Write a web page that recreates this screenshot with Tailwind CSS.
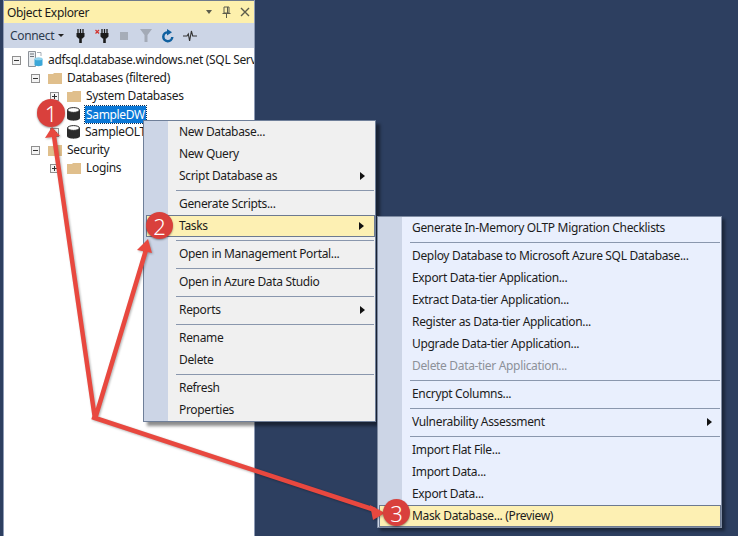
<!DOCTYPE html>
<html>
<head>
<meta charset="utf-8">
<script src="https://cdn.jsdelivr.net/npm/@tailwindcss/browser@4"></script>
</head>
<body class="m-0">
<div class="relative w-[738px] h-[536px] overflow-hidden bg-[#2d3f60] text-[12px] tracking-[-0.33px] text-[#1c1c1c] font-['Noto_Sans','Open_Sans',sans-serif]">

  <!-- Object Explorer panel -->
  <div class="absolute left-0 top-0 w-[256px] h-[536px] pl-[3px]">
    <div class="flex flex-col w-[252px] h-full border-r-[1px] border-l-[1px] border-[#8e9bb5] bg-white">
      <div class="flex items-center justify-between h-[23px] bg-[#fdf0ac] border-t border-t-[#6e7a8c] pl-[3px] pr-[4px]">
        <span class="text-[#1a1a1a] pt-[1px]">Object Explorer</span>
        <div class="flex items-center gap-[9px]">
          <svg width="8" height="5" viewBox="0 0 8 5"><path d="M1 0h6L4 4z" fill="#5c5c4c"/></svg>
          <svg width="9" height="12" viewBox="0 0 9 12"><path d="M2 1h5v6H2zM0.500 7.500h8M4.500 8v4M5.500 1v6" stroke="#5c5c4c" fill="none"/></svg>
          <svg width="10" height="10" viewBox="0 0 10 10"><path d="M1 1l8 8M9 1l-8 8" stroke="#5c5c4c" stroke-width="1.400"/></svg>
        </div>
      </div>
      <div class="flex items-center h-[25px] bg-[#ccd5e6] pl-[6px]">
        <span class="w-[44px] text-[#2c3b4f] shrink-0">Connect</span>
        <svg class="ml-[4px] shrink-0" width="6" height="4" viewBox="0 0 6 4"><path d="M0 0h6L3 3z" fill="#222"/></svg>
        <svg class="ml-[12px] shrink-0" width="9" height="14" viewBox="0 0 9 14"><path d="M2 0v4M4.500 0v4M7 0v4" stroke="#1c1c1c" stroke-width="1.300"/><path d="M0.500 4h8v3.500L6.500 9.500h-4L0.500 7.500zM3.200 9h2.600v5H3.200z" fill="#1c1c1c"/></svg>
        <svg class="ml-[10px] shrink-0" width="14" height="14" viewBox="0 0 14 14"><path d="M0.500 1l3.500 3.500M4 1L0.500 4.500" stroke="#d2322d" stroke-width="1.200"/><path d="M7 0v4M9.500 0v4M12 0v4" stroke="#1c1c1c" stroke-width="1.300"/><path d="M5.500 4h8v3.500l-2 2h-4l-2-2zM8.200 9h2.600v5H8.200z" fill="#1c1c1c"/></svg>
        <div class="ml-[11px] w-[8px] h-[8px] bg-[#a6adb8] shrink-0"></div>
        <svg class="ml-[12px] shrink-0" width="12" height="13" viewBox="0 0 12 13"><path d="M0 0h12L7.500 6v7h-3V6z" fill="#a3aab6"/></svg>
        <svg class="ml-[10px] shrink-0" width="12" height="14" viewBox="0 0 12 14"><path d="M10.300 8A4.500 4.500 0 1 1 6 3.200" stroke="#10609f" stroke-width="2.500" fill="none"/><path d="M5 0l5 3.300L5 6.500z" fill="#10609f"/></svg>
        <svg class="ml-[9px] shrink-0" width="14" height="12" viewBox="0 0 14 12"><path d="M0 6h4l1.300-2 1.300 7 1.800-10 1.300 5H14" stroke="#333" stroke-width="1.100" fill="none"/></svg>
      </div>
      <!-- Tree -->
      <div class="relative flex-1 pt-[3px] bg-white whitespace-nowrap overflow-hidden">
        <div class="flex items-center h-[18px] pl-[8px]">
          <span class="flex items-center justify-center shrink-0 w-[9px] h-[9px] border border-[#8f8f8f] bg-[#f4f4f4]"><span class="w-[5px] h-[1px] bg-[#333]"></span></span>
          <svg class="ml-[7px] mt-[-2px] shrink-0" width="15" height="16" viewBox="0 0 15 16"><path d="M0.500 0.500h7v15h-7z" fill="#e8ecef" stroke="#8d9299"/><path d="M2 3h4M2 5.500h4" stroke="#6e747c"/><path d="M6.500 8v6c0 1.500 8 1.500 8 0V8z" fill="#3ba7d8"/><ellipse cx="10.500" cy="7.800" rx="4" ry="1.500" fill="#8fd2ec"/><path d="M9 1.500h4v3.500" stroke="#a5adb5" fill="none"/></svg>
          <span class="ml-[5px]">adfsql.database.windows.net (SQL Serv</span>
        </div>
        <div class="flex items-center h-[18px] pl-[27px]">
          <span class="flex items-center justify-center shrink-0 w-[9px] h-[9px] border border-[#8f8f8f] bg-[#f4f4f4]"><span class="w-[5px] h-[1px] bg-[#333]"></span></span>
          <svg class="ml-[8px] shrink-0" width="14" height="12" viewBox="0 0 14 12"><path d="M0 2h5l1-1h8v11H0z" fill="#e0bf8c"/></svg>
          <span class="ml-[5px]">Databases (filtered)</span>
        </div>
        <div class="flex items-center h-[18px] pl-[46px]">
          <span class="flex items-center justify-center shrink-0 relative w-[9px] h-[9px] border border-[#8f8f8f] bg-[#f4f4f4]"><span class="absolute w-[5px] h-[1px] bg-[#333]"></span><span class="absolute w-[1px] h-[5px] bg-[#333]"></span></span>
          <svg class="ml-[8px] shrink-0" width="14" height="12" viewBox="0 0 14 12"><path d="M0 2h5l1-1h8v11H0z" fill="#e0bf8c"/></svg>
          <span class="ml-[5px]">System Databases</span>
        </div>
        <div class="flex items-center h-[18px] pl-[46px]">
          <span class="shrink-0 w-[9px] h-[9px]"></span>
          <svg class="ml-[8px] shrink-0" width="13" height="14" viewBox="0 0 13 14"><path d="M0 3v8c0 3.500 13 3.500 13 0V3z" fill="#2b2b2b"/><ellipse cx="6.500" cy="3" rx="6" ry="2.400" fill="#fff" stroke="#2b2b2b"/></svg>
          <span class="ml-[5px] px-[1px] h-[17px] leading-[17px] bg-[#0a78d7] text-white outline-1 outline-dotted outline-[#0b2f55]">SampleDW</span>
        </div>
        <div class="flex items-center h-[18px] pl-[46px]">
          <span class="flex items-center justify-center shrink-0 relative w-[9px] h-[9px] border border-[#8f8f8f] bg-[#f4f4f4]"><span class="absolute w-[5px] h-[1px] bg-[#333]"></span><span class="absolute w-[1px] h-[5px] bg-[#333]"></span></span>
          <svg class="ml-[8px] shrink-0" width="13" height="14" viewBox="0 0 13 14"><path d="M0 3v8c0 3.500 13 3.500 13 0V3z" fill="#2b2b2b"/><ellipse cx="6.500" cy="3" rx="6" ry="2.400" fill="#fff" stroke="#2b2b2b"/></svg>
          <span class="ml-[5px]">SampleOLTP</span>
        </div>
        <div class="flex items-center h-[18px] pl-[27px]">
          <span class="flex items-center justify-center shrink-0 w-[9px] h-[9px] border border-[#8f8f8f] bg-[#f4f4f4]"><span class="w-[5px] h-[1px] bg-[#333]"></span></span>
          <svg class="ml-[8px] shrink-0" width="14" height="12" viewBox="0 0 14 12"><path d="M0 2h5l1-1h8v11H0z" fill="#e0bf8c"/></svg>
          <span class="ml-[5px]">Security</span>
        </div>
        <div class="flex items-center h-[18px] pl-[46px]">
          <span class="flex items-center justify-center shrink-0 relative w-[9px] h-[9px] border border-[#8f8f8f] bg-[#f4f4f4]"><span class="absolute w-[5px] h-[1px] bg-[#333]"></span><span class="absolute w-[1px] h-[5px] bg-[#333]"></span></span>
          <svg class="ml-[8px] shrink-0" width="14" height="12" viewBox="0 0 14 12"><path d="M0 2h5l1-1h8v11H0z" fill="#e0bf8c"/></svg>
          <span class="ml-[5px]">Logins</span>
        </div>
      </div>
    </div>
  </div>

  <!-- Context menu -->
  <div class="absolute left-[143px] top-[120px] w-[233px] border border-[#6f7f99] bg-[#f0f0f0] shadow-[4px_4px_3px_rgba(0,0,0,0.45)]">
    <div class="absolute left-0 top-0 bottom-0 w-[24px] bg-[#ccd5e6]"></div>
    <div class="relative flex flex-col">
      <div class="flex items-center h-[22px] pl-[35px]">New Database...</div>
      <div class="flex items-center h-[22px] pl-[35px]">New Query</div>
      <div class="flex items-center justify-between h-[22px] pl-[35px] pr-[10px]">Script Database as<svg width="5" height="8" viewBox="0 0 5 8"><path d="M0 0l5 4-5 4z" fill="#111"/></svg></div>
      <div class="flex items-center h-[6px] pl-[32px] pr-[1px]"><div class="w-full h-[1px] bg-[#8a97ad]"></div></div>
      <div class="flex items-center h-[22px] pl-[35px]">Generate Scripts...</div>
      <div class="flex items-center justify-between h-[22px] ml-[2px] pl-[32px] pr-[10px] bg-[#fdf0b3] border border-[#6d7a90]">Tasks<svg width="5" height="8" viewBox="0 0 5 8"><path d="M0 0l5 4-5 4z" fill="#111"/></svg></div>
      <div class="flex items-center h-[6px] pl-[32px] pr-[1px]"><div class="w-full h-[1px] bg-[#8a97ad]"></div></div>
      <div class="flex items-center h-[22px] pl-[35px]">Open in Management Portal...</div>
      <div class="flex items-center h-[6px] pl-[32px] pr-[1px]"><div class="w-full h-[1px] bg-[#8a97ad]"></div></div>
      <div class="flex items-center h-[22px] pl-[35px]">Open in Azure Data Studio</div>
      <div class="flex items-center h-[6px] pl-[32px] pr-[1px]"><div class="w-full h-[1px] bg-[#8a97ad]"></div></div>
      <div class="flex items-center justify-between h-[22px] pl-[35px] pr-[10px]">Reports<svg width="5" height="8" viewBox="0 0 5 8"><path d="M0 0l5 4-5 4z" fill="#111"/></svg></div>
      <div class="flex items-center h-[6px] pl-[32px] pr-[1px]"><div class="w-full h-[1px] bg-[#8a97ad]"></div></div>
      <div class="flex items-center h-[22px] pl-[35px]">Rename</div>
      <div class="flex items-center h-[22px] pl-[35px]">Delete</div>
      <div class="flex items-center h-[6px] pl-[32px] pr-[1px]"><div class="w-full h-[1px] bg-[#8a97ad]"></div></div>
      <div class="flex items-center h-[22px] pl-[35px]">Refresh</div>
      <div class="flex items-center h-[22px] pl-[35px]">Properties</div>
    </div>
  </div>

  <!-- Tasks submenu -->
  <div class="absolute left-[377px] top-[216px] w-[345px] border border-[#7f8ca3] bg-[#e9effd] shadow-[3px_3px_3px_rgba(0,0,0,0.4)]">
    <div class="absolute left-0 top-0 bottom-0 w-[24px] bg-[#ccd5e6]"></div>
    <div class="relative flex flex-col">
      <div class="flex items-center h-[22px] pl-[34px]">Generate In-Memory OLTP Migration Checklists</div>
      <div class="flex items-center h-[6px] pl-[32px] pr-[1px]"><div class="w-full h-[1px] bg-[#8a97ad]"></div></div>
      <div class="flex items-center h-[22px] pl-[34px]">Deploy Database to Microsoft Azure SQL Database...</div>
      <div class="flex items-center h-[22px] pl-[34px]">Export Data-tier Application...</div>
      <div class="flex items-center h-[22px] pl-[34px]">Extract Data-tier Application...</div>
      <div class="flex items-center h-[22px] pl-[34px]">Register as Data-tier Application...</div>
      <div class="flex items-center h-[22px] pl-[34px]">Upgrade Data-tier Application...</div>
      <div class="flex items-center h-[22px] pl-[34px] text-[#8d9199]">Delete Data-tier Application...</div>
      <div class="flex items-center h-[6px] pl-[32px] pr-[1px]"><div class="w-full h-[1px] bg-[#8a97ad]"></div></div>
      <div class="flex items-center h-[22px] pl-[34px]">Encrypt Columns...</div>
      <div class="flex items-center h-[6px] pl-[32px] pr-[1px]"><div class="w-full h-[1px] bg-[#8a97ad]"></div></div>
      <div class="flex items-center justify-between h-[22px] pl-[34px] pr-[9px]">Vulnerability Assessment<svg width="5" height="8" viewBox="0 0 5 8"><path d="M0 0l5 4-5 4z" fill="#111"/></svg></div>
      <div class="flex items-center h-[6px] pl-[32px] pr-[1px]"><div class="w-full h-[1px] bg-[#8a97ad]"></div></div>
      <div class="flex items-center h-[22px] pl-[34px]">Import Flat File...</div>
      <div class="flex items-center h-[22px] pl-[34px]">Import Data...</div>
      <div class="flex items-center h-[22px] pl-[34px]">Export Data...</div>
      <div class="flex items-center h-[22px] ml-[1px] pl-[32px] bg-[#fdf0b3] border border-[#6d7a90]">Mask Database... (Preview)</div>
    </div>
  </div>

  <!-- Annotation arrows -->
  <svg class="absolute left-0 top-0 drop-shadow-[1px_1px_1px_rgba(0,0,0,0.3)]" width="738" height="536" viewBox="0 0 738 536">
    <g stroke="#e8483f" stroke-width="4.500" fill="none">
      <path d="M95 419L54 136M95 419L146 250M92 417L375 510"/>
    </g>
    <g fill="#e8483f">
      <path d="M52 127L45 138L60 136z"/>
      <path d="M148 239L137 250L152 253z"/>
      <path d="M385 513L370 505L373 520z"/>
    </g>
  </svg>

  <!-- Badges -->
  <div class="absolute left-[37px] top-[99px] w-[28px] h-[28px] rounded-full bg-[#d9403c] text-white flex items-center justify-center text-[22px] font-light tracking-normal leading-none shadow-[0_1px_2px_rgba(0,0,0,0.4)]">1</div>
  <div class="absolute left-[146px] top-[212px] w-[27px] h-[27px] rounded-full bg-[#d9403c] text-white flex items-center justify-center text-[22px] font-light tracking-normal leading-none shadow-[0_1px_2px_rgba(0,0,0,0.4)]">2</div>
  <div class="absolute left-[383px] top-[499px] w-[27px] h-[27px] rounded-full bg-[#d9403c] text-white flex items-center justify-center text-[22px] font-light tracking-normal leading-none shadow-[0_1px_2px_rgba(0,0,0,0.4)]">3</div>
</div>
</body>
</html>
